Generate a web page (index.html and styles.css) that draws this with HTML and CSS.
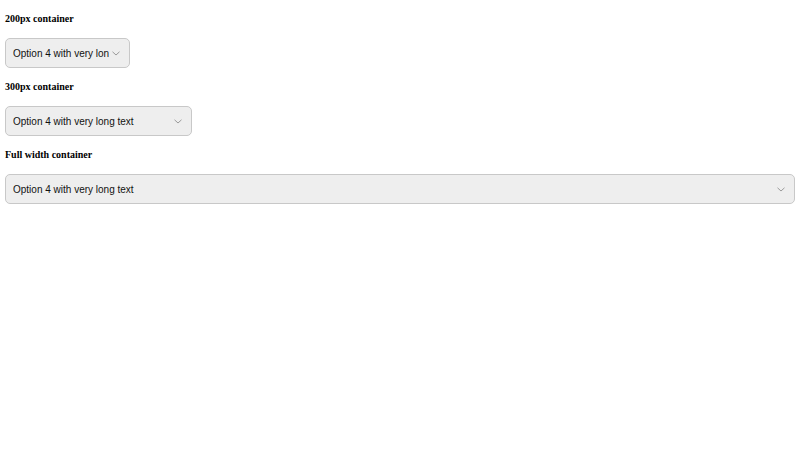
FILE: index.html
```html
<!DOCTYPE html>
<html>
<head>
<meta charset="utf-8">
<link rel="stylesheet" href="styles.css">
</head>
<body>
  <section class="block">
    <h3 class="title">200px container</h3>
    <div class="box w200">
      <div class="select">
        <span class="value">Option 4 with very long text</span>
        <svg class="chev" width="8" height="5" viewBox="0 0 8 5"><path d="M0.5 0.8 L4 4 L7.5 0.8" fill="none" stroke="#9a9a9a" stroke-width="1"/></svg>
      </div>
    </div>
  </section>
  <section class="block">
    <h3 class="title">300px container</h3>
    <div class="box w300">
      <div class="select">
        <span class="value">Option 4 with very long text</span>
        <svg class="chev" width="8" height="5" viewBox="0 0 8 5"><path d="M0.5 0.8 L4 4 L7.5 0.8" fill="none" stroke="#9a9a9a" stroke-width="1"/></svg>
      </div>
    </div>
  </section>
  <section class="block">
    <h3 class="title">Full width container</h3>
    <div class="box">
      <div class="select">
        <span class="value">Option 4 with very long text</span>
        <svg class="chev" width="8" height="5" viewBox="0 0 8 5"><path d="M0.5 0.8 L4 4 L7.5 0.8" fill="none" stroke="#9a9a9a" stroke-width="1"/></svg>
      </div>
    </div>
  </section>
</body>
</html>
```
FILE: styles.css
```css
html, body {
  margin: 0;
  padding: 0;
  background: #ffffff;
}
body {
  padding: 0 5px;
  font-family: "Liberation Serif", serif;
  color: #000;
}
.block {
  display: flex;
  flex-direction: column;
}
.title {
  margin: 12px 0 12px;
  font-size: 10px;
  line-height: 14px;
  font-weight: bold;
}
.box.w200 { width: 125px; }
.box.w300 { width: 187px; }
.select {
  box-sizing: border-box;
  height: 30px;
  border: 1px solid #c8c8c8;
  border-radius: 5px;
  background: #eeeeee;
  display: flex;
  align-items: center;
  padding: 0 9px 0 7px;
  font-family: "Liberation Sans", Arial, sans-serif;
  font-size: 10px;
  color: #111;
}
.value {
  flex: 1;
  min-width: 0;
  overflow: hidden;
  white-space: nowrap;
  margin-right: 3px;
}
.chev {
  flex: none;
  display: block;
}
```
